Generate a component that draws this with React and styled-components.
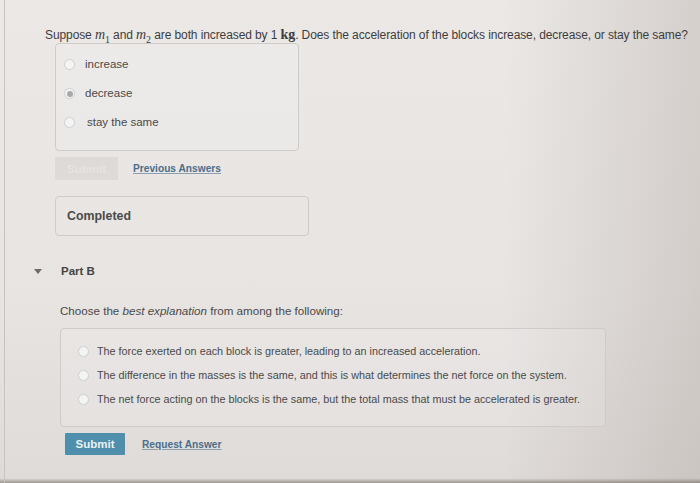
import React from "react";
import styled, { createGlobalStyle } from "styled-components";

const GlobalStyle = createGlobalStyle`
  html, body {
    margin: 0;
    padding: 0;
    width: 700px;
    height: 483px;
    overflow: hidden;
  }
  body {
    font-family: "Liberation Sans", Arial, sans-serif;
    color: #3a3a3a;
    background:
      linear-gradient(90deg, rgba(0,0,0,0) 0%, rgba(0,0,0,0) 72%, rgba(90,70,60,0.15) 100%),
      linear-gradient(180deg, #ebe8e6 0%, #e7e4e2 60%, #dfdbd9 99%, #9e9792 100%);
  }
`;

const Page = styled.div`
  height: 483px;
  box-sizing: border-box;
  padding: 27px 0 0 40px;
  border-left: 1px solid #c9c2be;
  margin-left: 4px;
  display: flex;
  flex-direction: column;
`;

const Question = styled.p`
  margin: 0;
  font-size: 12px;
  line-height: 16px;
  color: #3d3d3d;
  white-space: nowrap;
  letter-spacing: -0.1px;
`;

const MathVar = styled.span`
  font-family: "Liberation Serif", "Times New Roman", serif;
  font-style: italic;
  font-size: 14px;
  sub {
    font-style: normal;
    font-size: 10px;
    line-height: 0;
  }
`;

const Unit = styled.span`
  font-family: "Liberation Serif", "Times New Roman", serif;
  font-size: 14px;
  font-weight: bold;
`;

const ChoiceBox = styled.div`
  margin: ${(p) => p.$margin};
  width: ${(p) => p.$width}px;
  box-sizing: border-box;
  border: 1px solid #cfcbc8;
  border-radius: 4px;
  background: rgba(255, 255, 255, 0.12);
  padding: ${(p) => p.$padding};
  display: flex;
  flex-direction: column;
  gap: ${(p) => p.$gap}px;
`;

const Choice = styled.label`
  display: flex;
  align-items: center;
  gap: ${(p) => p.$gap}px;
  font-size: ${(p) => p.$size}px;
  line-height: 13px;
  color: #4a4a4a;
  white-space: nowrap;
`;

const Radio = styled.span`
  width: 11px;
  height: 11px;
  border-radius: 50%;
  border: 1px solid #cfcfcf;
  background: #f4f4f4;
  box-sizing: border-box;
  display: flex;
  align-items: center;
  justify-content: center;
  flex-shrink: 0;
  &::after {
    content: "";
    width: 6px;
    height: 6px;
    border-radius: 50%;
    background: ${(p) => (p.$checked ? "#a9a9a9" : "transparent")};
  }
`;

const Actions = styled.div`
  display: flex;
  align-items: center;
  gap: ${(p) => p.$gap}px;
  margin: ${(p) => p.$margin};
`;

const Button = styled.button`
  font-family: "Liberation Sans", Arial, sans-serif;
  font-size: 11.5px;
  font-weight: bold;
  border: none;
  border-radius: 1px;
  padding: 0;
  width: ${(p) => p.$width}px;
  height: ${(p) => p.$height}px;
  color: ${(p) => (p.$disabled ? "#e8e3e1" : "#e9f1f5")};
  background: ${(p) => (p.$disabled ? "#dedad8" : "#4f8fac")};
`;

const LinkText = styled.a`
  font-size: 10.2px;
  font-weight: bold;
  color: #4a6f8c;
  text-decoration: underline;
  text-decoration-color: #8aa0b0;
`;

const StatusBox = styled.div`
  margin: 16px 0 0 10px;
  width: 254px;
  height: 40px;
  box-sizing: border-box;
  border: 1px solid #cfcbc8;
  border-radius: 4px;
  padding: 0 11px;
  display: flex;
  align-items: center;
  font-size: 12.4px;
  font-weight: bold;
  color: #4a4a4a;
`;

const PartHeader = styled.div`
  display: flex;
  align-items: center;
  gap: 19px;
  margin: 29px 0 0 -11px;
  font-size: 11.5px;
  font-weight: bold;
  color: #444;
`;

const Caret = styled.span`
  width: 0;
  height: 0;
  border-left: 4px solid transparent;
  border-right: 4px solid transparent;
  border-top: 5px solid #6b6b6b;
`;

const Prompt = styled.p`
  margin: 27px 0 0 15px;
  font-size: 11.6px;
  color: #4a4a4a;
  em {
    font-style: italic;
  }
`;

export default function App() {
  return (
    <>
      <GlobalStyle />
      <Page>
        <Question>
          Suppose <MathVar>m<sub>1</sub></MathVar> and <MathVar>m<sub>2</sub></MathVar> are both
          increased by 1 <Unit>kg</Unit>. Does the acceleration of the blocks increase,
          decrease, or stay the same?
        </Question>

        <ChoiceBox $margin="0 0 0 10px" $width={244} $padding="14px 8px 21px" $gap={16}>
          <Choice $gap={10} $size={11.5}>
            <Radio />
            increase
          </Choice>
          <Choice $gap={10} $size={11.5}>
            <Radio $checked />
            decrease
          </Choice>
          <Choice $gap={12} $size={11.5}>
            <Radio />
            stay the same
          </Choice>
        </ChoiceBox>

        <Actions $gap={15} $margin="6px 0 0 10px">
          <Button $disabled $width={63} $height={23}>Submit</Button>
          <LinkText>Previous Answers</LinkText>
        </Actions>

        <StatusBox>Completed</StatusBox>

        <PartHeader>
          <Caret />
          Part B
        </PartHeader>

        <Prompt>
          Choose the <em>best explanation</em> from among the following:
        </Prompt>

        <ChoiceBox $margin="11px 0 0 15px" $width={546} $padding="16px 17px 20px" $gap={11}>
          <Choice $gap={8} $size={10.8}>
            <Radio />
            The force exerted on each block is greater, leading to an increased acceleration.
          </Choice>
          <Choice $gap={8} $size={10.8}>
            <Radio />
            The difference in the masses is the same, and this is what determines the net force on the system.
          </Choice>
          <Choice $gap={8} $size={10.8}>
            <Radio />
            The net force acting on the blocks is the same, but the total mass that must be accelerated is greater.
          </Choice>
        </ChoiceBox>

        <Actions $gap={17} $margin="6px 0 0 20px">
          <Button $width={60} $height={22}>Submit</Button>
          <LinkText>Request Answer</LinkText>
        </Actions>
      </Page>
    </>
  );
}
